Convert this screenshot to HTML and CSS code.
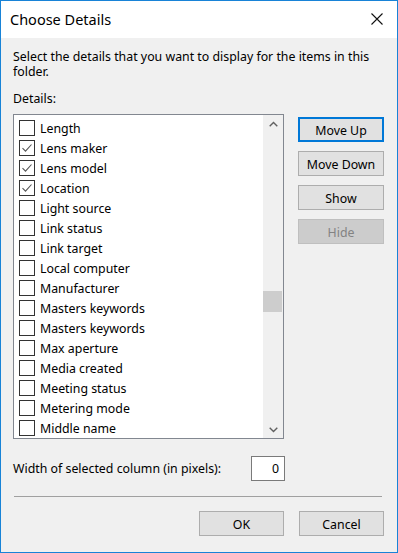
FILE: index.html
```html
<!DOCTYPE html>
<html>
<head>
<meta charset="utf-8">
<link rel="stylesheet" href="styles.css">
</head>
<body>
<div class="window">
  <div class="titlebar">
    <span class="title">Choose Details</span>
    <svg class="close" width="12" height="12" viewBox="0 0 12 12"><path d="M0.5 0.5L11.5 11.5M11.5 0.5L0.5 11.5" stroke="#111" stroke-width="1.1" fill="none"/></svg>
  </div>
  <div class="content">
    <p class="desc">Select the details that you want to display for the items in this folder.</p>
    <div class="details-label">Details:</div>
    <div class="main">
      <div class="listbox">
        <ul class="items">
          <li><span class="cb"></span>Length</li>
          <li><span class="cb checked"><svg viewBox="0 0 14 14" width="14" height="14"><path d="M2.5 7.2L5.5 10.2L11.5 3.5" stroke="#555" stroke-width="1.1" fill="none"/></svg></span>Lens maker</li>
          <li><span class="cb checked"><svg viewBox="0 0 14 14" width="14" height="14"><path d="M2.5 7.2L5.5 10.2L11.5 3.5" stroke="#555" stroke-width="1.1" fill="none"/></svg></span>Lens model</li>
          <li><span class="cb checked"><svg viewBox="0 0 14 14" width="14" height="14"><path d="M2.5 7.2L5.5 10.2L11.5 3.5" stroke="#555" stroke-width="1.1" fill="none"/></svg></span>Location</li>
          <li><span class="cb"></span>Light source</li>
          <li><span class="cb"></span>Link status</li>
          <li><span class="cb"></span>Link target</li>
          <li><span class="cb"></span>Local computer</li>
          <li><span class="cb"></span>Manufacturer</li>
          <li><span class="cb"></span>Masters keywords</li>
          <li><span class="cb"></span>Masters keywords</li>
          <li><span class="cb"></span>Max aperture</li>
          <li><span class="cb"></span>Media created</li>
          <li><span class="cb"></span>Meeting status</li>
          <li><span class="cb"></span>Metering mode</li>
          <li><span class="cb"></span>Middle name</li>
        </ul>
        <div class="scrollbar">
          <div class="arrow"><svg width="9" height="6" viewBox="0 0 9 6"><path d="M0.7 5.3L4.5 1.5L8.3 5.3" stroke="#606060" stroke-width="1.4" fill="none"/></svg></div>
          <div class="track"><div class="thumb"></div></div>
          <div class="arrow"><svg width="9" height="6" viewBox="0 0 9 6"><path d="M0.7 0.7L4.5 4.5L8.3 0.7" stroke="#606060" stroke-width="1.4" fill="none"/></svg></div>
        </div>
      </div>
      <div class="side-buttons">
        <button class="btn default">Move Up</button>
        <button class="btn">Move Down</button>
        <button class="btn">Show</button>
        <button class="btn disabled">Hide</button>
      </div>
    </div>
    <div class="width-row">
      <span>Width of selected column (in pixels):</span>
      <div class="num-input">0</div>
    </div>
    <div class="separator"></div>
    <div class="footer">
      <button class="btn">OK</button>
      <button class="btn">Cancel</button>
    </div>
  </div>
</div>
</body>
</html>
```
FILE: styles.css
```css
* { box-sizing: border-box; }
html, body { margin: 0; padding: 0; }
body {
  width: 398px;
  height: 553px;
  font-family: "Noto Sans", "Open Sans", sans-serif;
  font-size: 12.35px;
  color: #000;
  background: #f0f0f0;
}
.window {
  width: 398px;
  height: 553px;
  border: 1px solid #1883d7;
  display: flex;
  flex-direction: column;
  background: #f0f0f0;
}
.titlebar {
  height: 37px;
  background: #fff;
  display: flex;
  align-items: center;
  justify-content: space-between;
  padding: 0 14px 0 9px;
  flex: none;
}
.title {
  font-size: 14.5px;
  color: #000;
  margin-top: -1px;
}
.close { display: block; margin-top: -1px; }
.content {
  flex: 1;
  padding: 11px 13px 0 12px;
  display: flex;
  flex-direction: column;
}
.desc {
  margin: 0;
  line-height: 15px;
  width: 365px;
}
.details-label {
  margin-top: 12px;
  line-height: 15px;
}
.main {
  display: flex;
  margin-top: 8px;
}
.listbox {
  width: 271px;
  height: 325px;
  border: 1px solid #828790;
  background: #fff;
  display: flex;
}
.items {
  list-style: none;
  margin: 0;
  padding: 3px 0 0 5px;
  flex: 1;
}
.items li {
  height: 20px;
  display: flex;
  align-items: center;
  white-space: nowrap;
}
.cb {
  width: 16px;
  height: 16px;
  border: 1px solid #333;
  background: #fff;
  margin-right: 5px;
  display: flex;
  align-items: center;
  justify-content: center;
  flex: none;
}
.cb svg { display: block; }
.scrollbar {
  width: 20px;
  background: #f0f0f0;
  display: flex;
  flex-direction: column;
  flex: none;
}
.arrow {
  height: 17px;
  display: flex;
  align-items: center;
  justify-content: center;
  flex: none;
}
.track {
  flex: 1;
  padding-top: 159px;
}
.thumb {
  height: 21px;
  background: #cdcdcd;
  margin-right: 1px;
}
.side-buttons {
  margin-left: 14px;
  display: flex;
  flex-direction: column;
  gap: 9px;
  padding-top: 3px;
}
.btn {
  width: 86px;
  height: 25px;
  background: #e1e1e1;
  border: 1px solid #adadad;
  font-family: "Noto Sans", "Open Sans", sans-serif;
  font-size: 12.35px;
  color: #000;
  padding: 1px 0 0 0;
  margin: 0;
}
.btn.default {
  border: 2px solid #0078d7;
}
.btn.disabled {
  background: #cccccc;
  border-color: #bfbfbf;
  color: #838383;
}
.width-row {
  display: flex;
  align-items: center;
  justify-content: space-between;
  width: 272px;
  margin-top: 17px;
}
.num-input {
  width: 34px;
  height: 25px;
  background: #fff;
  border: 1px solid #7a7a7a;
  text-align: right;
  padding-right: 5px;
  line-height: 23px;
}
.separator {
  height: 1px;
  background: #a0a0a0;
  width: 368px;
  margin-top: 15px;
  margin-left: 1px;
}
.footer {
  display: flex;
  justify-content: flex-end;
  gap: 15px;
  margin-top: 14px;
  padding-right: 0;
  width: 371px;
}
.footer .btn { width: 85px; }
```
